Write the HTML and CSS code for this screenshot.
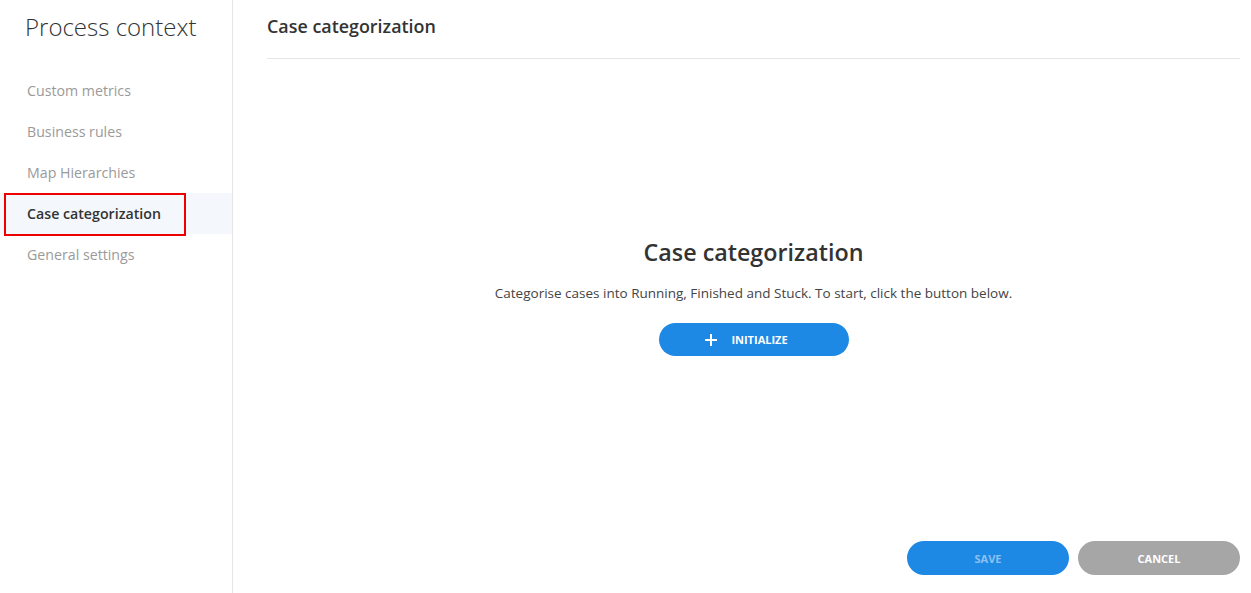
FILE: index.html
```html
<!DOCTYPE html>
<html>
<head>
<meta charset="utf-8">
<link rel="stylesheet" href="styles.css">
</head>
<body>
<div class="app">
  <aside class="sidebar">
    <h1 class="side-title">Process context</h1>
    <nav class="nav">
      <div class="nav-item">Custom metrics</div>
      <div class="nav-item">Business rules</div>
      <div class="nav-item">Map Hierarchies</div>
      <div class="nav-item active"><span class="highlight"></span>Case categorization</div>
      <div class="nav-item">General settings</div>
    </nav>
  </aside>
  <main class="main">
    <header class="header">Case categorization</header>
    <section class="empty">
      <h2 class="empty-title">Case categorization</h2>
      <p class="empty-text">Categorise cases into Running, Finished and Stuck. To start, click the button below.</p>
      <button class="btn-init">
        <svg class="plus" width="12" height="12" viewBox="0 0 12 12"><path d="M6 0v12M0 6h12" stroke="#fff" stroke-width="2"/></svg>
        <span>INITIALIZE</span>
      </button>
    </section>
    <footer class="footer">
      <button class="btn btn-save">SAVE</button>
      <button class="btn btn-cancel">CANCEL</button>
    </footer>
  </main>
</div>
</body>
</html>
```

FILE: styles.css
```css
* { box-sizing: border-box; }
html, body { margin: 0; padding: 0; background: #fff; }
body {
  font-family: "Open Sans", "Noto Sans", sans-serif;
  color: #333;
  width: 1251px;
  height: 593px;
  overflow: hidden;
}
.app {
  display: flex;
  height: 593px;
}
.sidebar {
  width: 233px;
  flex: none;
  border-right: 1px solid #e6e6e6;
}
.side-title {
  margin: 0;
  padding: 10px 0 0 25px;
  height: 70px;
  font-size: 24px;
  font-weight: 300;
  color: #333;
}
.nav {
  display: flex;
  flex-direction: column;
}
.nav-item {
  position: relative;
  height: 41px;
  line-height: 41px;
  padding-left: 27px;
  font-size: 14.2px;
  color: #9a9a9a;
}
.nav-item.active {
  background: #f4f8fc;
  color: #333;
  font-weight: 600;
}
.highlight {
  position: absolute;
  left: 4px;
  top: 0;
  width: 182px;
  height: 43px;
  border: 2px solid #ee0000;
}
.main {
  flex: 1;
  display: flex;
  flex-direction: column;
  padding: 0 11px 18px 34px;
}
.header {
  height: 59px;
  border-bottom: 1px solid #e6e6e6;
  font-size: 17.9px;
  font-weight: 600;
  color: #333;
  padding-top: 14px;
}
.empty {
  flex: 1;
  display: flex;
  flex-direction: column;
  align-items: center;
  padding-top: 176px;
}
.empty-title {
  margin: 0;
  font-size: 23.3px;
  font-weight: 600;
  color: #333;
  line-height: 34px;
}
.empty-text {
  margin: 14px 0 0;
  font-size: 13.5px;
  color: #444;
  line-height: 20px;
}
.btn-init {
  margin-top: 20px;
  width: 190px;
  height: 33px;
  border: none;
  border-radius: 17px;
  background: #1e88e5;
  color: #fff;
  font-family: inherit;
  font-size: 11px;
  font-weight: 700;
  display: flex;
  align-items: center;
  justify-content: center;
  gap: 14px;
  padding: 0 14px 0 0;
}
.footer {
  display: flex;
  justify-content: flex-end;
  gap: 9px;
}
.btn {
  width: 162px;
  height: 34px;
  border: none;
  border-radius: 17px;
  font-family: inherit;
  font-size: 11px;
  font-weight: 700;
}
.btn-save {
  background: #1e88e5;
  color: #8cc1f0;
}
.btn-cancel {
  background: #a6a6a6;
  color: #fff;
}
```
